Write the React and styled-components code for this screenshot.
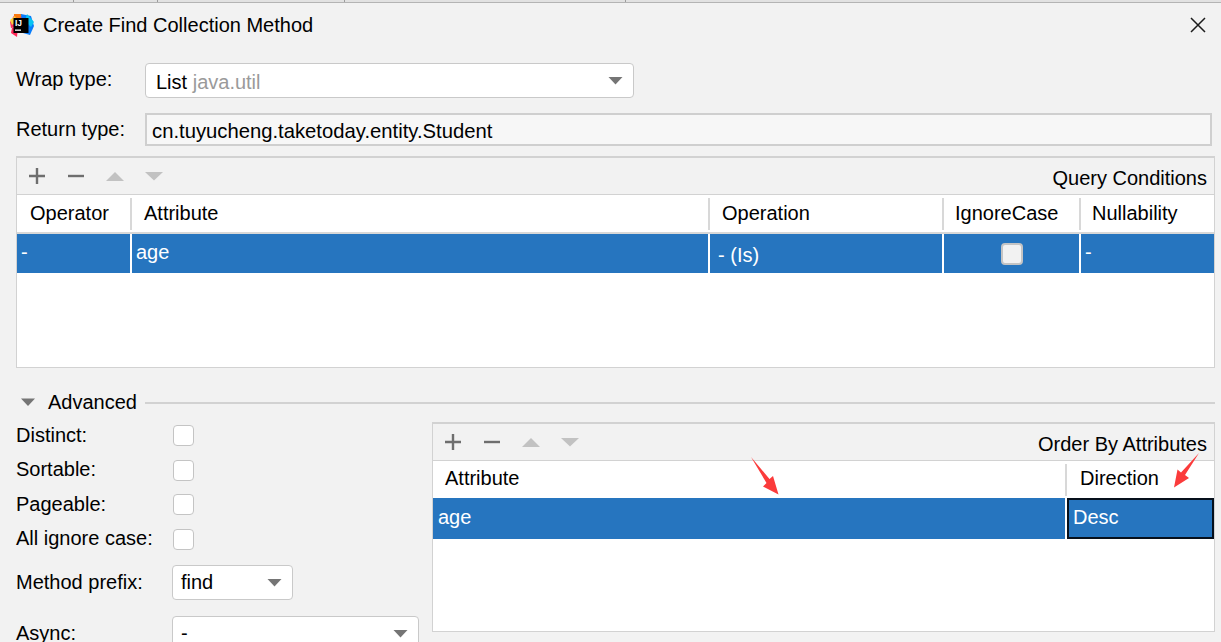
import React from 'react';
import styled, { createGlobalStyle } from 'styled-components';

const GlobalStyle = createGlobalStyle`
  html, body {
    margin: 0;
    padding: 0;
    background: #f2f2f2;
    overflow: hidden;
  }
  * {
    box-sizing: border-box;
  }
`;

const Page = styled.div`
  position: relative;
  width: 1221px;
  height: 642px;
  overflow: hidden;
  background: #f2f2f2;
  color: #000;
  font-family: 'Liberation Sans', Arial, sans-serif;
  font-size: 20px;
`;

const BackgroundStrip = styled.div`
  display: flex;
  height: 3px;
  background: #e2e2e2;
  border-bottom: 1px solid #b4b4b4;
`;

const StripTab = styled.div`
  width: ${({ $width }) => $width}px;
  border-right: 1px solid #9c9c9c;
`;

const TitleBar = styled.div`
  display: flex;
  align-items: center;
  height: 44px;
  padding: 0 14px 0 9px;
`;

const TitleText = styled.div`
  margin-left: 9px;
  flex: 1;
  white-space: nowrap;
`;

const CloseButton = styled.button`
  display: flex;
  padding: 0;
  border: 0;
  background: none;
`;

const Form = styled.div`
  padding: 16px 6px 0 16px;
`;

const FieldRow = styled.div`
  display: flex;
  align-items: center;
  height: ${({ $height }) => $height}px;
  margin-bottom: ${({ $gap }) => $gap || 0}px;
`;

const FieldLabel = styled.label`
  width: ${({ $width }) => $width}px;
  flex: none;
  white-space: nowrap;
  line-height: 24px;
  position: relative;
  top: ${({ $shift }) => $shift || 0}px;
`;

const Combo = styled.div`
  display: flex;
  align-items: center;
  justify-content: space-between;
  width: ${({ $width }) => $width}px;
  height: 35px;
  flex: none;
  padding: 0 10px 0 ${({ $pad }) => $pad}px;
  background: #fff;
  border: 1.5px solid #c9c9c9;
  border-radius: 4px;
`;

const ComboValue = styled.span`
  padding-top: ${({ $drop }) => $drop || 0}px;
`;

const Hint = styled.span`
  color: #9a9a9a;
`;

const ReadOnlyField = styled.div`
  display: flex;
  align-items: center;
  width: 1067px;
  height: 33px;
  padding: 3px 0 0 5px;
  font-size: 20.25px;
  background: #f7f7f7;
  border: 2px solid #cfcfcf;
`;

const Panel = styled.div`
  display: flex;
  flex-direction: column;
  height: ${({ $height }) => $height}px;
  width: ${({ $width }) => $width}px;
  flex: none;
  background: #fff;
  border: 1px solid #d2d2d2;
  border-top-width: 2px;
`;

const Toolbar = styled.div`
  display: flex;
  align-items: center;
  height: 37px;
  flex: none;
  padding: 0 7px 0 11px;
  gap: 20px;
  background: #f2f2f2;
  border-bottom: 1px solid #d2d2d2;
`;

const ToolButton = styled.button`
  display: flex;
  padding: 0;
  border: 0;
  background: none;
`;

const ToolbarTitle = styled.div`
  margin-left: auto;
  position: relative;
  top: 2px;
`;

const TableRow = styled.div`
  display: grid;
  grid-template-columns: ${({ $columns }) => $columns};
  height: ${({ $height }) => $height}px;
  flex: none;
`;

const HeadCell = styled.div`
  display: flex;
  align-items: center;
  margin: 3px 0 2px;
  padding-left: ${({ $pad }) => $pad}px;
  padding-bottom: ${({ $lift }) => $lift || 0}px;
  border-right: ${({ $last }) => ($last ? '0' : '2px solid #d8d8d8')};
`;

const HeadRule = styled.div`
  height: 2px;
  flex: none;
  background: #d8d8d8;
`;

const BodyCell = styled.div`
  display: flex;
  align-items: center;
  justify-content: ${({ $center }) => ($center ? 'center' : 'flex-start')};
  padding-left: ${({ $pad }) => $pad || 0}px;
  padding-bottom: ${({ $lift }) => $lift || 0}px;
  padding-top: ${({ $drop }) => $drop || 0}px;
  color: #fff;
  background: #2675bf;
  border-right: ${({ $last }) => ($last ? '0' : '2px solid #fff')};
`;

const FocusCell = styled(BodyCell)`
  border: 2px solid #06101c;
`;

const RowCheck = styled.span`
  display: block;
  width: 22px;
  height: 22px;
  background: #f2f2f2;
  border: 2px solid #c4c4c4;
  border-radius: 4px;
`;

const AdvancedHeader = styled.div`
  display: flex;
  align-items: center;
  height: 24px;
  margin-top: 22px;
`;

const AdvancedTitle = styled.span`
  margin-left: 12px;
  white-space: nowrap;
`;

const AdvancedRule = styled.div`
  flex: 1;
  height: 2px;
  margin: 2px 0 0 8px;
  background: #d2d2d2;
`;

const AdvancedCaret = styled.svg`
  margin-left: 4px;
`;

const AdvancedBody = styled.div`
  display: flex;
  justify-content: space-between;
`;

const OptionColumn = styled.div`
  width: 403px;
  padding-top: 11px;
`;

const CheckBox = styled.span`
  display: block;
  width: 21px;
  height: 21px;
  background: #fff;
  border: 1.5px solid #c4c4c4;
  border-radius: 4px;
`;

const OrderColumn = styled.div`
  padding-top: 8px;
`;

const ArrowMark = styled.svg`
  position: absolute;
  left: ${({ $x }) => $x}px;
  top: ${({ $y }) => $y}px;
`;

const QUERY_COLUMNS = '115px 578px 234px 137px 1fr';
const ORDER_COLUMNS = '634px 1fr';

function ComboCaret() {
  return (
    <svg width="15" height="9" viewBox="0 0 15 9">
      <path d="M0.5 1 H14.5 L7.5 8.5 Z" fill="#757575" />
    </svg>
  );
}

function PanelToolbar({ title }) {
  return (
    <Toolbar>
      <ToolButton aria-label="Add">
        <svg width="18" height="18" viewBox="0 0 18 18">
          <path d="M9 1 V17 M1 9 H17" stroke="#6e6e6e" strokeWidth="2.4" />
        </svg>
      </ToolButton>
      <ToolButton aria-label="Remove">
        <svg width="19" height="18" viewBox="0 0 19 18">
          <path d="M2 9 H18" stroke="#6e6e6e" strokeWidth="2.4" />
        </svg>
      </ToolButton>
      <ToolButton aria-label="Move up">
        <svg width="20" height="18" viewBox="0 0 20 18">
          <path d="M10 5 L19 14 H1 Z" fill="#c2c2c2" />
        </svg>
      </ToolButton>
      <ToolButton aria-label="Move down">
        <svg width="20" height="18" viewBox="0 0 20 18">
          <path d="M0 5 H18 L9 13.5 Z" fill="#c2c2c2" />
        </svg>
      </ToolButton>
      <ToolbarTitle>{title}</ToolbarTitle>
    </Toolbar>
  );
}

function IdeaLogo() {
  return (
    <svg width="25" height="24" viewBox="0 0 25 24">
      <path d="M1 9 L6 1 L14 3 L8 14 L2 15 Z" fill="#fe315d" />
      <path d="M5 1 H13 L11 6 L5 5 Z" fill="#f97a12" />
      <path d="M1 7 L6 3 L8 8 L3 12 Z" fill="#fde03b" opacity="0.9" />
      <path d="M12 1 L22 3 L25 13 L21 22 L14 20 Z" fill="#087cfa" />
      <path d="M18 1 L25 9 L22 14 L16 8 Z" fill="#07c3f2" />
      <path d="M3 15 L9 14 L8 24 L2 20 Z" fill="#fe2857" />
      <rect x="4.5" y="5" width="15" height="15" fill="#000" />
      <text x="6" y="13" fill="#fff" fontSize="8.5" fontWeight="700" fontFamily="'Liberation Sans', sans-serif">IJ</text>
      <rect x="6" y="16.5" width="6" height="1.3" fill="#fff" />
    </svg>
  );
}

function App() {
  return (
    <Page>
      <GlobalStyle />
      <BackgroundStrip>
        <StripTab $width={74} />
        <StripTab $width={84} />
        <StripTab $width={187} />
        <StripTab $width={281} />
      </BackgroundStrip>
      <TitleBar>
        <IdeaLogo />
        <TitleText>Create Find Collection Method</TitleText>
        <CloseButton aria-label="Close">
          <svg width="18" height="18" viewBox="0 0 18 18">
            <path d="M2 2 L16 16 M16 2 L2 16" stroke="#1c1c1c" strokeWidth="1.5" />
          </svg>
        </CloseButton>
      </TitleBar>
      <Form>
        <FieldRow $height={35} $gap={15}>
          <FieldLabel $width={129} $shift={-2}>Wrap type:</FieldLabel>
          <Combo $width={489} $pad={10}>
            <ComboValue $drop={3}>List <Hint>java.util</Hint></ComboValue>
            <ComboCaret />
          </Combo>
        </FieldRow>
        <FieldRow $height={33} $gap={10}>
          <FieldLabel $width={129} $shift={-1}>Return type:</FieldLabel>
          <ReadOnlyField>cn.tuyucheng.taketoday.entity.Student</ReadOnlyField>
        </FieldRow>
        <Panel $height={212} $width={1199}>
          <PanelToolbar title="Query Conditions" />
          <TableRow $columns={QUERY_COLUMNS} $height={37}>
            <HeadCell $pad={13} $lift={1}>Operator</HeadCell>
            <HeadCell $pad={12} $lift={1}>Attribute</HeadCell>
            <HeadCell $pad={12} $lift={1}>Operation</HeadCell>
            <HeadCell $pad={11} $lift={1}>IgnoreCase</HeadCell>
            <HeadCell $pad={11} $lift={1} $last>Nullability</HeadCell>
          </TableRow>
          <HeadRule />
          <TableRow $columns={QUERY_COLUMNS} $height={39}>
            <BodyCell $pad={4} $lift={3}>-</BodyCell>
            <BodyCell $pad={4} $lift={2}>age</BodyCell>
            <BodyCell $pad={8} $drop={3}>- (Is)</BodyCell>
            <BodyCell $center><RowCheck /></BodyCell>
            <BodyCell $pad={4} $lift={3} $last>-</BodyCell>
          </TableRow>
        </Panel>
        <AdvancedHeader>
          <AdvancedCaret width="16" height="10" viewBox="0 0 16 10">
            <path d="M1 1.5 H15 L8 9 Z" fill="#757575" />
          </AdvancedCaret>
          <AdvancedTitle>Advanced</AdvancedTitle>
          <AdvancedRule />
        </AdvancedHeader>
        <AdvancedBody>
          <OptionColumn>
            <FieldRow $height={21} $gap={13.5}>
              <FieldLabel $width={157} $shift={-1}>Distinct:</FieldLabel>
              <CheckBox />
            </FieldRow>
            <FieldRow $height={21} $gap={13.5}>
              <FieldLabel $width={157} $shift={-1}>Sortable:</FieldLabel>
              <CheckBox />
            </FieldRow>
            <FieldRow $height={21} $gap={13.5}>
              <FieldLabel $width={157} $shift={-1}>Pageable:</FieldLabel>
              <CheckBox />
            </FieldRow>
            <FieldRow $height={21} $gap={15}>
              <FieldLabel $width={157} $shift={-1}>All ignore case:</FieldLabel>
              <CheckBox />
            </FieldRow>
            <FieldRow $height={35} $gap={16}>
              <FieldLabel $width={156}>Method prefix:</FieldLabel>
              <Combo $width={121} $pad={8}>
                <ComboValue>find</ComboValue>
                <ComboCaret />
              </Combo>
            </FieldRow>
            <FieldRow $height={35}>
              <FieldLabel $width={156}>Async:</FieldLabel>
              <Combo $width={247} $pad={8}>
                <ComboValue>-</ComboValue>
                <ComboCaret />
              </Combo>
            </FieldRow>
          </OptionColumn>
          <OrderColumn>
            <Panel $height={210} $width={783}>
              <PanelToolbar title="Order By Attributes" />
              <TableRow $columns={ORDER_COLUMNS} $height={37}>
                <HeadCell $pad={12} $lift={3}>Attribute</HeadCell>
                <HeadCell $pad={13} $lift={3} $last>Direction</HeadCell>
              </TableRow>
              <TableRow $columns={ORDER_COLUMNS} $height={41}>
                <BodyCell $pad={5} $lift={2}>age</BodyCell>
                <FocusCell $pad={4} $lift={2} $last>Desc</FocusCell>
              </TableRow>
            </Panel>
          </OrderColumn>
        </AdvancedBody>
      </Form>
      <ArrowMark $x={750} $y={455} width="30" height="41" viewBox="0 0 30 41">
        <path d="M1 2 L19.5 24 L23 21 L28.5 39.5 L13 31.5 L16.5 28 Z" fill="#fb3b3b" />
      </ArrowMark>
      <ArrowMark $x={1172} $y={451} width="28" height="38" viewBox="0 0 28 38">
        <path d="M27 2 L13 24 L17 27 L2 36.5 L5.5 18.5 L9 21.5 Z" fill="#fb3b3b" />
      </ArrowMark>
    </Page>
  );
}

export default App;
